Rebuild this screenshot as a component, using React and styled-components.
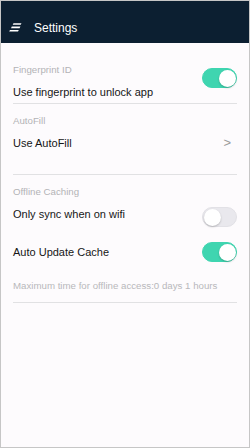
import React from "react";
import styled, { createGlobalStyle } from "styled-components";

const Global = createGlobalStyle`
  html, body { margin: 0; padding: 0; }
  body { font-family: "Liberation Sans", Arial, sans-serif; }
`;

const Screen = styled.div`
  box-sizing: border-box;
  width: 250px;
  height: 448px;
  border: 1px solid #c6c6c6;
  background: #fdfbfd;
  display: flex;
  flex-direction: column;
  overflow: hidden;
`;

const Header = styled.header`
  height: 42px;
  background: #0c1f31;
  display: flex;
  align-items: flex-end;
  padding: 0 0 7px 8px;
  box-sizing: border-box;
  gap: 12px;
`;

const Title = styled.h1`
  margin: 0;
  font-size: 12px;
  font-weight: 400;
  color: #ffffff;
  line-height: 16px;
`;

const Section = styled.section`
  margin: 0 12px;
  padding-top: ${(p) => p.$top}px;
  border-bottom: 1.5px solid #e1e1e3;
  padding-bottom: ${(p) => p.$bottom}px;
  display: flex;
  flex-direction: column;
`;

const Label = styled.div`
  font-size: 9.7px;
  line-height: 14px;
  color: #b3b3b6;
`;

const Row = styled.div`
  display: flex;
  justify-content: space-between;
  align-items: ${(p) => p.$align || "center"};
  margin-top: ${(p) => p.$mt || 0}px;
  min-height: ${(p) => p.$h || 16}px;
`;

const RowText = styled.div`
  font-size: 11px;
  line-height: 16px;
  color: #161616;
`;

const Grid = styled.div`
  display: grid;
  grid-template-columns: 1fr auto;
  grid-template-rows: 14px 16px;
  row-gap: 7px;
`;

const Cell = styled.div`
  grid-column: 1;
`;

const Toggle = styled.div`
  box-sizing: border-box;
  width: 35px;
  height: 20px;
  border-radius: 10px;
  background: ${(p) => (p.$on ? "#3fd5b0" : "#e9e8ed")};
  border: 1px solid ${(p) => (p.$on ? "#3fd5b0" : "#e2e1e6")};
  position: relative;
  grid-column: 2;
  grid-row: 1 / span 2;
  align-self: start;
  margin-top: ${(p) => p.$mt || 0}px;
  flex-shrink: 0;
`;

const Knob = styled.span`
  position: absolute;
  top: 0.5px;
  ${(p) => (p.$on ? "right: 0.5px;" : "left: 0.5px;")}
  width: 17px;
  height: 17px;
  border-radius: 50%;
  background: #ffffff;
  box-shadow: 0 1px 2px rgba(0, 0, 0, 0.22);
`;

const Chevron = styled.span`
  font-size: 13px;
  line-height: 16px;
  color: #9a9a9a;
  margin-right: 6px;
`;

const Note = styled.div`
  font-size: 9.7px;
  line-height: 14px;
  color: #b8b8bb;
  margin-top: ${(p) => p.$mt || 0}px;
`;

function Switch({ on, mt }) {
  return (
    <Toggle $on={on} $mt={mt}>
      <Knob $on={on} />
    </Toggle>
  );
}

function MenuIcon() {
  return (
    <svg width="13" height="9" viewBox="0 0 13 9" style={{ marginBottom: 4 }}>
      <path d="M4.5 0.2h8l-0.8 1.6h-8z" fill="#ffffff" />
      <path d="M2.8 3.6h8.6l-0.8 1.6h-8.6z" fill="#ffffff" />
      <path d="M1 7h8.8l-0.8 1.6h-8.8z" fill="#ffffff" />
    </svg>
  );
}

export default function App() {
  return (
    <>
      <Global />
      <Screen>
        <Header>
          <MenuIcon />
          <Title>Settings</Title>
        </Header>

        <Section $top={20} $bottom={3}>
          <Grid>
            <Cell>
              <Label>Fingerprint ID</Label>
            </Cell>
            <Switch on mt={5} />
            <Cell>
              <RowText>Use fingerprint to unlock app</RowText>
            </Cell>
          </Grid>
        </Section>

        <Section $top={10} $bottom={23}>
          <Label>AutoFill</Label>
          <Row $mt={7}>
            <RowText>Use AutoFill</RowText>
            <Chevron>&gt;</Chevron>
          </Row>
        </Section>

        <Section $top={10} $bottom={9}>
          <Label>Offline Caching</Label>
          <Row $mt={7} $align="flex-start">
            <RowText>Only sync when on wifi</RowText>
            <Switch mt={1} />
          </Row>
          <Row $mt={15}>
            <RowText>Auto Update Cache</RowText>
            <Switch on />
          </Row>
          <Note $mt={17}>Maximum time for offline access:0 days 1 hours</Note>
        </Section>
      </Screen>
    </>
  );
}
